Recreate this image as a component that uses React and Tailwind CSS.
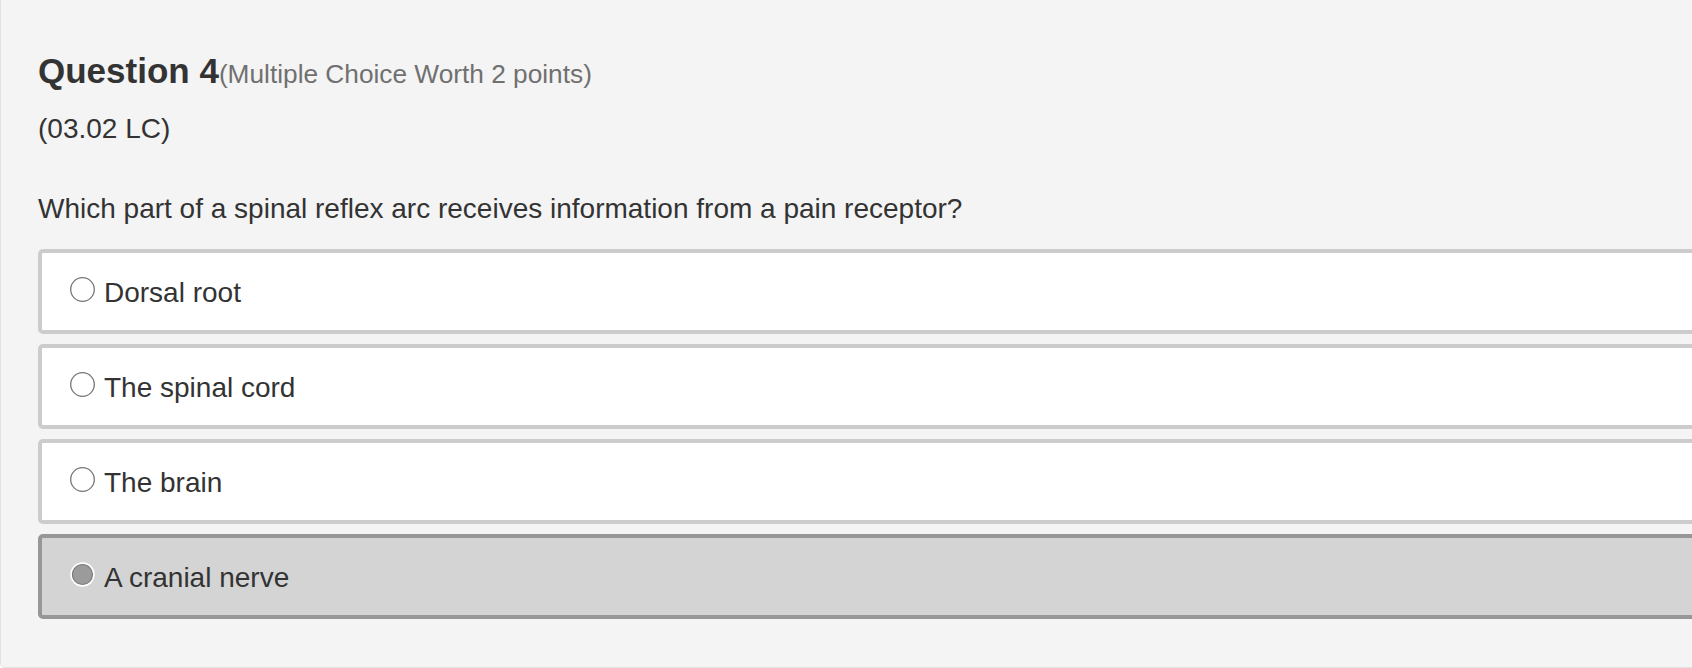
const options = [
  { label: 'Dorsal root' },
  { label: 'The spinal cord' },
  { label: 'The brain' },
  { label: 'A cranial nerve', selected: true },
]

function Radio({ checked }) {
  return (
    <svg width="25" height="25" viewBox="0 0 25 25" className="shrink-0 mt-[4px]">
      {checked ? (
        <>
          <circle cx="12.5" cy="12.5" r="12.2" fill="#ffffff" />
          <circle cx="12.5" cy="12.5" r="10" fill="#9b9b9b" stroke="#7d7d7d" strokeWidth="1.2" />
        </>
      ) : (
        <circle cx="12.5" cy="12.5" r="11.8" fill="#ffffff" stroke="#767676" strokeWidth="1.3" />
      )}
    </svg>
  )
}

export default function App() {
  return (
    <div className="w-[1692px] h-[668px] overflow-hidden bg-white font-['Liberation_Sans',Arial,sans-serif] text-[#333333]">
      <div className="w-[1780px] h-[668px] bg-[#f4f4f4] border-l border-r border-b border-[#e2e2e2] rounded-b-[5px] pl-[37px] pt-[51px]">
        <h2 className="leading-[40px] whitespace-nowrap">
          <span className="text-[35px] font-bold text-[#333333]">Question 4</span>
          <span className="text-[26.25px] text-[#707070]">(Multiple Choice Worth 2 points)</span>
        </h2>
        <p className="mt-[11px] text-[28px] leading-[40px]">(03.02 LC)</p>
        <p className="mt-[40px] text-[28px] leading-[40px]">
          Which part of a spinal reflex arc receives information from a pain receptor?
        </p>
        <div className="mt-[20px] flex flex-col gap-[10px]">
          {options.map(o => (
            <div
              key={o.label}
              className={`h-[85px] border-4 rounded-[5px] pl-[28px] pt-[20px] flex items-start ${
                o.selected ? 'bg-[#d4d4d4] border-[#979797]' : 'bg-white border-[#cccccc]'
              }`}
            >
              <Radio checked={o.selected} />
              <span className="ml-[9px] text-[28px] leading-[40px] text-[#333333]">{o.label}</span>
            </div>
          ))}
        </div>
      </div>
    </div>
  )
}
